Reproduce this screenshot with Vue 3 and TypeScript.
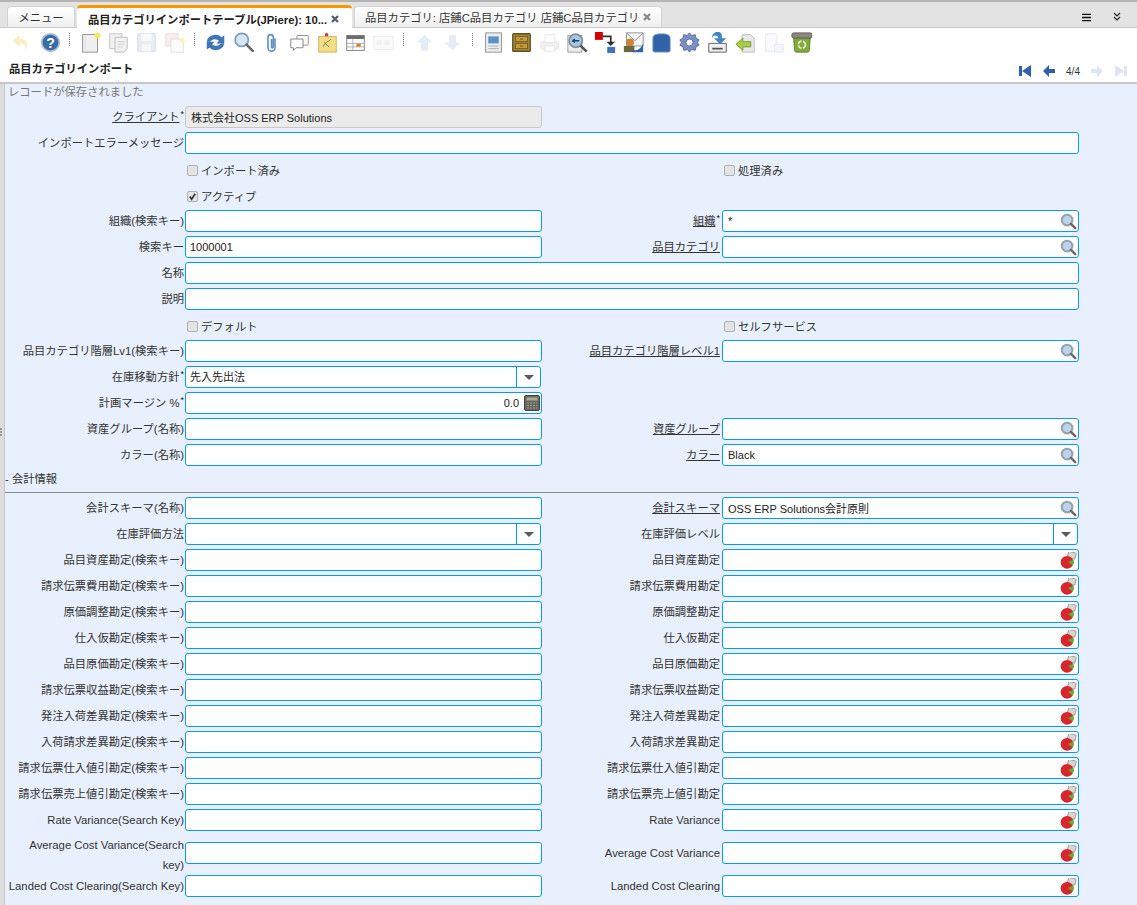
<script setup lang="ts">
type Cell = {
  label: string
  kind: 'text' | 'lookup' | 'select' | 'number' | 'account' | 'readonly' | 'check'
  value?: string
  link?: boolean
  req?: boolean
  checked?: boolean
}
type Row = { left?: Cell; right?: Cell; section?: string; tall?: boolean }

const tx = (label: string, value = ''): Cell => ({ label, kind: 'text', value })
const lk = (label: string, value = '', req = false): Cell => ({ label, kind: 'lookup', value, link: true, req })
const ac = (label: string): Cell => ({ label, kind: 'account' })
const ck = (label: string, checked = false): Cell => ({ label, kind: 'check', checked })

const accounts: [string, string][] = [
  ['品目資産勘定(検索キー)', '品目資産勘定'],
  ['請求伝票費用勘定(検索キー)', '請求伝票費用勘定'],
  ['原価調整勘定(検索キー)', '原価調整勘定'],
  ['仕入仮勘定(検索キー)', '仕入仮勘定'],
  ['品目原価勘定(検索キー)', '品目原価勘定'],
  ['請求伝票収益勘定(検索キー)', '請求伝票収益勘定'],
  ['発注入荷差異勘定(検索キー)', '発注入荷差異勘定'],
  ['入荷請求差異勘定(検索キー)', '入荷請求差異勘定'],
  ['請求伝票仕入値引勘定(検索キー)', '請求伝票仕入値引勘定'],
  ['請求伝票売上値引勘定(検索キー)', '請求伝票売上値引勘定'],
  ['Rate Variance(Search Key)', 'Rate Variance'],
  ['Average Cost Variance(Search key)', 'Average Cost Variance'],
  ['Landed Cost Clearing(Search Key)', 'Landed Cost Clearing']
]

const rows: Row[] = [
  { left: { label: 'クライアント', kind: 'readonly', value: '株式会社OSS ERP Solutions', link: true, req: true } },
  { left: { label: 'インポートエラーメッセージ', kind: 'text' } },
  { left: ck('インポート済み'), right: ck('処理済み') },
  { left: ck('アクティブ', true) },
  { left: tx('組織(検索キー)'), right: lk('組織', '*', true) },
  { left: tx('検索キー', '1000001'), right: lk('品目カテゴリ') },
  { left: tx('名称') },
  { left: tx('説明') },
  { left: ck('デフォルト'), right: ck('セルフサービス') },
  { left: tx('品目カテゴリ階層Lv1(検索キー)'), right: lk('品目カテゴリ階層レベル1') },
  { left: { label: '在庫移動方針', kind: 'select', value: '先入先出法', req: true } },
  { left: { label: '計画マージン %', kind: 'number', value: '0.0', req: true } },
  { left: tx('資産グループ(名称)'), right: lk('資産グループ') },
  { left: tx('カラー(名称)'), right: lk('カラー', 'Black') },
  { section: '会計情報' },
  { left: tx('会計スキーマ(名称)'), right: lk('会計スキーマ', 'OSS ERP Solutions会計原則') },
  { left: { label: '在庫評価方法', kind: 'select' }, right: { label: '在庫評価レベル', kind: 'select' } },
  ...accounts.map(([l, r]) => ({ left: tx(l), right: ac(r), tall: l.startsWith('Average') }))
]

// 全幅の入力欄
const wide = new Set(['インポートエラーメッセージ', '名称', '説明'])

type Tool = { sep?: boolean; off?: boolean; svg?: string }
const tools: Tool[] = [
  { off: true, svg: '<path d="M11 3L3 10l8 7v-4c5 0 7 2 7 8 4-8 1-13-7-13z" fill="#f0d870"/>' },
  { svg: '<circle cx="12" cy="12" r="10" fill="#3a6ca8" stroke="#a9bfd8" stroke-width="2"/><text x="12" y="18" font-size="16" font-weight="700" font-family="Liberation Sans" text-anchor="middle" fill="#fff">?</text>' },
  { sep: true },
  { svg: '<rect x="3" y="3" width="17" height="20" fill="#f0f0f0" stroke="#888"/><path d="M6 4v18" stroke="#ddd"/><circle cx="20" cy="4" r="3.500" fill="#f5e56b"/>' },
  { off: true, svg: '<rect x="2" y="2" width="14" height="17" fill="#ddd" stroke="#666"/><path d="M8 6h14v13l-4 4H8z" fill="#ddd" stroke="#555"/><path d="M11 11h8M11 14h8M11 17h6" stroke="#888"/>' },
  { off: true, svg: '<rect x="2" y="2" width="20" height="20" fill="#c4d4e8" stroke="#8fa8c8"/><rect x="6" y="2" width="12" height="8" fill="#f4f4f4"/><rect x="7" y="14" width="10" height="8" fill="#eee"/>' },
  { off: true, svg: '<rect x="2" y="2" width="14" height="14" fill="#f0d0d0" stroke="#caa"/><rect x="8" y="8" width="14" height="15" fill="#f6f6f6" stroke="#aaa"/><circle cx="21" cy="10" r="3" fill="#f5e56b"/>' },
  { sep: true },
  { svg: '<path d="M2 11a10 9 0 0 1 17-5l3-2v9h-9l3-3a6 5 0 0 0-10 1z" fill="#3f74b5"/><path d="M22 13a10 9 0 0 1-17 5l-3 2v-9h9l-3 3a6 5 0 0 0 10-1z" fill="#3f74b5"/>' },
  { svg: '<circle cx="10" cy="9" r="7.500" fill="#d6e6f5" stroke="#7f9db9" stroke-width="2"/><path d="M15.500 14.500l7 7" stroke="#666" stroke-width="3" stroke-linecap="round"/>' },
  { svg: '<path d="M16 7v11a4 4 0 0 1-8 0V6a3 3 0 0 1 6 0v11a1 1 0 0 1-2 0V8" fill="none" stroke="#5f8fc4" stroke-width="1.800"/>' },
  { svg: '<rect x="9" y="4" width="13" height="11" rx="1" fill="#fff" stroke="#888"/><path d="M2 8h14v10H8l-3 3v-3H2z" fill="#fff" stroke="#777"/>' },
  { svg: '<rect x="2" y="5" width="20" height="18" fill="#f2de88" stroke="#c9b35a"/><circle cx="11" cy="3" r="2" fill="#d33"/><path d="M7 17c3-7 6-5 9-9M8 12l6 5" stroke="#8a7a36" fill="none"/>' },
  { svg: '<rect x="2" y="4" width="20" height="17" fill="#fff" stroke="#777"/><rect x="2" y="4" width="20" height="4" fill="#6d6d6d"/><rect x="13" y="13" width="5" height="4" fill="#ee7d22"/><path d="M2 13h20M2 17h20M9 8v13" stroke="#aaa"/>' },
  { off: true, svg: '<rect x="1" y="5" width="22" height="15" fill="#f6f6f6" stroke="#ccc"/><rect x="4" y="9" width="6" height="6" fill="#ddd"/><rect x="13" y="9" width="6" height="6" fill="#ddd"/>' },
  { sep: true },
  { off: true, svg: '<path d="M12 3l9 9h-5v9H8v-9H3z" fill="#c0d1ea"/>' },
  { off: true, svg: '<path d="M12 21l9-9h-5V3H8v9H3z" fill="#c0d1ea"/>' },
  { sep: true },
  { svg: '<rect x="3" y="1" width="18" height="22" fill="#eee" stroke="#888"/><rect x="6" y="5" width="12" height="8" fill="#5a93c9"/><path d="M6 16h12M6 19h12" stroke="#aaa"/>' },
  { svg: '<rect x="2" y="2" width="20" height="20" rx="1" fill="#a8893a" stroke="#5e5020" stroke-width="1.500"/><rect x="5" y="5" width="14" height="6" fill="#c99a3a" stroke="#6e5a22"/><rect x="5" y="13" width="14" height="6" fill="#c99a3a" stroke="#6e5a22"/><path d="M10 8h4M10 16h4" stroke="#5e5020"/>' },
  { off: true, svg: '<rect x="2" y="11" width="20" height="9" rx="2" fill="#ddd" stroke="#bbb"/><rect x="7" y="3" width="11" height="9" fill="#f8f8f8" stroke="#bbb"/><rect x="7" y="16" width="11" height="6" fill="#fff" stroke="#bbb"/>' },
  { svg: '<rect x="1" y="4" width="16" height="19" fill="#eee" stroke="#999"/><circle cx="10" cy="10" r="7.500" fill="#a9c6e2" stroke="#7f8fa0" stroke-width="2"/><path d="M6 10h8M6 10l3-2M6 10l3 2" stroke="#245" stroke-width="1.500" fill="none"/><path d="M15.500 15.500l7 7" stroke="#555" stroke-width="3"/>' },
  { svg: '<rect x="0" y="0" width="9" height="9" fill="#d40000"/><path d="M9 5h9v7" fill="none" stroke="#333" stroke-width="2"/><path d="M13 11h10l-5 5z" fill="#333"/><rect x="14" y="17" width="9" height="7" fill="#3f74b5"/>' },
  { svg: '<path d="M4 1h19v15H4z" fill="#f6f6f6" stroke="#888"/><path d="M4 1l9.500 9L23 1" fill="none" stroke="#888"/><circle cx="8" cy="12" r="4.500" fill="#c9863a"/><rect x="1" y="16" width="12" height="7" fill="#6d6a3a"/><path d="M11 20c5 2 9 0 12-7v10H11z" fill="#3366a8"/>' },
  { svg: '<path d="M2 8c0-5 3-6 10-6s10 1 10 6v13c0 1-1 2-2 2H4c-1 0-2-1-2-2z" fill="#2f62a6" stroke="#9bb4d0"/>' },
  { svg: '<path d="M12 1l2.500 3 4-1 1 4 3.500 2-2 3 2 3-3.500 2-1 4-4-1-2.500 3-2.500-3-4 1-1-4L1 15l2-3-2-3 3.500-2 1-4 4 1z" fill="#7b8fc4" stroke="#55659a"/><circle cx="12" cy="12" r="4" fill="#fff" stroke="#55659a"/>' },
  { svg: '<path d="M2 13h20v10H2z" fill="#f0f0f0" stroke="#555"/><rect x="6" y="18" width="12" height="2" fill="#555"/><path d="M6 8a6 7 0 0 1 11-5v4h5l-7 7-7-7h5a2 2 0 0 0-7 1z" fill="#3f86c2"/>' },
  { svg: '<path d="M8 3h10l4 4v16H8z" fill="#e8e8e8" stroke="#bbb"/><path d="M1 14l8-7v4h9v6H9v4z" fill="#a8cc4a" stroke="#7a9a30"/>' },
  { off: true, svg: '<path d="M3 2h13v20H3z" fill="#f4f4f4" stroke="#ccc"/><rect x="13" y="14" width="10" height="9" fill="#dfe8f2" stroke="#bcd"/>' },
  { svg: '<path d="M3 6h19l-1 15c0 1-1 2-2 2H6c-1 0-2-1-2-2z" fill="#84a83e" stroke="#5c7a2a"/><rect x="1" y="1" width="23" height="6" rx="2" fill="#8a8a7c" stroke="#555"/><circle cx="12.500" cy="14.500" r="4" fill="none" stroke="#dcecb8" stroke-width="2" stroke-dasharray="5 1.500"/>' }
]
</script>

<template>
  <div class="page">
    <div class="tabbar">
      <div class="tabs">
        <div class="tab tab-menu">メニュー</div>
        <div class="tab tab-active">
          <span>品目カテゴリインポートテーブル(JPiere): 10...</span>
          <svg class="close" viewBox="0 0 10 10"><path d="M2 2l6 6M8 2l-6 6" stroke="#56606c" stroke-width="2.400" /></svg>
        </div>
        <div class="tab tab-other">
          <span>品目カテゴリ: 店鋪C品目カテゴリ 店鋪C品目カテゴリ</span>
          <svg class="close" viewBox="0 0 10 10"><path d="M2 2l6 6M8 2l-6 6" stroke="#8a8a8a" stroke-width="2.400" /></svg>
        </div>
      </div>
      <div class="tabbar-btns">
        <svg viewBox="0 0 12 10" class="burger"><path d="M1 1.500h10M1 5h10M1 8.500h10" stroke="#111" stroke-width="1.500" /></svg>
        <svg viewBox="0 0 10 10" class="chev"><path d="M2 1l3 3 3-3M2 5l3 3 3-3" fill="none" stroke="#222" stroke-width="1.200" /></svg>
      </div>
    </div>

    <div class="toolbar">
      <template v-for="(t, i) in tools" :key="i">
        <span v-if="t.sep" class="sep"></span>
        <span v-else class="tool">
          <svg viewBox="0 0 24 24" :class="{ off: t.off }" v-html="t.svg"></svg>
        </span>
      </template>
    </div>

    <div class="headbar">
      <span class="head-title">品目カテゴリインポート</span>
      <div class="pager">
        <svg viewBox="0 0 14 14"><path d="M1 2h3v10H1zM13 1v12L4 7z" fill="#2f5fae" /></svg>
        <svg viewBox="0 0 14 14"><path d="M1 7l6-6v4h6v4H7v4z" fill="#2f5fae" /></svg>
        <span class="pager-text">4/4</span>
        <svg viewBox="0 0 14 14"><path d="M13 7L7 1v4H1v4h6v4z" fill="#dfe6f3" /></svg>
        <svg viewBox="0 0 14 14"><path d="M10 2h3v10h-3zM1 1v12l9-6z" fill="#dfe6f3" /></svg>
      </div>
    </div>

    <div class="body">
      <div class="splitter"></div>
      <div class="content">
        <div class="status">レコードが保存されました</div>
        <div class="form">
          <template v-for="(r, i) in rows" :key="i">
            <div v-if="r.section" class="section">
              <span>- {{ r.section }}</span>
            </div>
            <template v-else>
              <template v-for="(c, side) in [r.left, r.right]" :key="side">
                <template v-if="c">
                  <template v-if="c.kind === 'check'">
                    <div></div>
                    <label class="check">
                      <span class="box" :class="{ on: c.checked }">
                        <svg v-if="c.checked" viewBox="0 0 10 10"><path d="M2 5l2 3 4-6" fill="none" stroke="#333" stroke-width="1.800" /></svg>
                      </span>
                      {{ c.label }}
                    </label>
                  </template>
                  <template v-else>
                    <div class="label" :class="{ two: r.tall && side === 0, right: side === 1 }">
                      <span :class="{ link: c.link }">{{ c.label }}</span><sup v-if="c.req" class="star">*</sup>
                    </div>
                    <div class="field" :class="[c.kind, { wide: wide.has(c.label) }]">
                      <template v-if="c.kind === 'select'">
                        <div class="sel-text">{{ c.value }}</div>
                        <div class="sel-btn"><i class="caret"></i></div>
                      </template>
                      <template v-else>
                        <span class="val">{{ c.value }}</span>
                        <svg v-if="c.kind === 'lookup'" class="ico" viewBox="0 0 24 24">
                          <circle cx="10" cy="10" r="7.500" fill="#bcd3ec" stroke="#97a3ad" stroke-width="3" />
                          <path d="M15.500 15.500l6 6" stroke="#6a6a6a" stroke-width="3.500" stroke-linecap="round" />
                        </svg>
                        <svg v-if="c.kind === 'number'" class="ico calc" viewBox="0 0 16 16">
                          <rect x="0.500" y="0.500" width="15" height="15" rx="1.500" fill="#66685f" stroke="#444" />
                          <rect x="2.500" y="2.500" width="11" height="3" fill="#a8ab8c" />
                          <path d="M3 8h10M3 10.500h10M3 13h10" stroke="#9a9a90" stroke-dasharray="2 1" />
                        </svg>
                        <svg v-if="c.kind === 'account'" class="ico" viewBox="0 0 24 24">
                          <rect x="11" y="0" width="11" height="9" rx="1" fill="#d6d6d6" stroke="#888" transform="rotate(15 16 5)" />
                          <circle cx="10" cy="14.500" r="9" fill="#d9262b" />
                          <path d="M11 14l8-3a9 9 0 0 1-1 8z" fill="#5fae3a" />
                        </svg>
                      </template>
                    </div>
                  </template>
                </template>
                <template v-else-if="side === 1 && !(r.left && wide.has(r.left.label))">
                  <div></div><div></div>
                </template>
              </template>
            </template>
          </template>
        </div>
      </div>
    </div>
  </div>
</template>

<style>
html,
body {
  margin: 0;
  background: #fff;
}
</style>

<style scoped>
.page {
  width: 1137px;
  height: 905px;
  overflow: hidden;
  display: flex;
  flex-direction: column;
  font-family: 'Liberation Sans', 'Noto Sans CJK JP', sans-serif;
  font-size: 11.3px;
  color: #333;
}

.tabbar {
  flex: none;
  height: 25px;
  border-top: 2px solid #b4b4b4;
  border-bottom: 1px solid #c8c8c8;
  background: #e3e3e3;
  display: flex;
  justify-content: space-between;
  align-items: flex-end;
}

.tabs {
  display: flex;
  align-items: flex-end;
  padding-left: 7px;
  gap: 2px;
  margin-bottom: -1px;
}

.tab {
  box-sizing: border-box;
  height: 22px;
  border: 1px solid #d2d2d2;
  border-bottom: 1px solid #c8c8c8;
  border-radius: 4px 4px 0 0;
  background: linear-gradient(#fff, #f0f0f0);
  display: flex;
  align-items: center;
  padding: 0 10px;
  white-space: nowrap;
}

.tab-menu {
  width: 68px;
  justify-content: center;
  padding: 0;
}

.tab-active {
  width: 275px;
  height: 23px;
  font-weight: 700;
  border: none;
  border-top: 3px solid #f39800;
  background: #fff;
  justify-content: space-between;
  padding: 1px 12px 0 11px;
  color: #222;
}

.tab-other {
  width: 308px;
  justify-content: space-between;
  padding: 0 9px 0 10px;
}

.close {
  width: 10px;
  height: 10px;
  flex: none;
}

.tabbar-btns {
  display: flex;
  align-items: center;
  gap: 20px;
  height: 20px;
  padding-right: 15px;
}

.burger {
  width: 11px;
  height: 9px;
}

.chev {
  width: 10px;
  height: 10px;
}

.toolbar {
  flex: none;
  height: 28px;
  display: flex;
  align-items: center;
  padding-left: 6px;
  background: #fff;
}

.tool {
  width: 28px;
  height: 24px;
  display: flex;
  align-items: center;
  justify-content: center;
}

.tool:nth-child(2) {
  margin-left: 2px;
  margin-right: -1px;
}

.tool svg {
  width: 21px;
  height: 21px;
}

.tool svg.off {
  opacity: 0.4;
}

.sep {
  width: 13px;
  height: 14px;
  margin-top: -4px;
  background: linear-gradient(#777 50%, transparent 50%) center / 1px 2px repeat-y;
}

.headbar {
  flex: none;
  box-sizing: border-box;
  height: 28px;
  border-bottom: 2px solid #c8c8c8;
  padding: 0 9px;
  display: flex;
  justify-content: space-between;
  align-items: center;
  background: #fff;
}

.head-title {
  font-weight: 700;
  color: #222;
  margin-top: -3px;
}

.pager {
  display: flex;
  align-items: center;
  gap: 10px;
  margin-top: 4px;
}

.pager svg {
  width: 14px;
  height: 14px;
}

.pager-text {
  font-size: 10px;
  width: 14px;
  text-align: center;
}

.body {
  flex: 1;
  display: flex;
  min-height: 0;
  background: #e8effd;
}

.splitter {
  flex: none;
  width: 4px;
  background: #dcdcdc;
  border-right: 1px solid #c8c8c8;
  position: relative;
}

/* スプリッターのつまみ */
.splitter::after {
  content: '';
  position: absolute;
  left: 0;
  top: 344px;
  width: 2px;
  height: 8px;
  background: linear-gradient(#999 66%, transparent 66%) 0 0 / 2px 3px repeat-y;
}

.content {
  flex: 1;
  min-width: 0;
}

.status {
  height: 22px;
  padding-left: 3px;
  line-height: 16px;
  color: #777;
  box-sizing: border-box;
}

.form {
  display: grid;
  grid-template-columns: 180px 357px 180px 357px;
  grid-auto-rows: minmax(22px, auto);
  row-gap: 4px;
  align-items: center;
}

.label {
  text-align: right;
  padding-right: 1px;
  line-height: 17px;
  color: #333;
}

.label.right {
  padding-right: 2px;
}

/* 折り返すラベルは行間が広い */
.label.two {
  line-height: 20px;
  margin-bottom: -4px;
}

.link {
  text-decoration: underline;
}

.star {
  font-size: 9px;
  line-height: 0;
  vertical-align: 4px;
  margin-left: 1px;
  color: #222;
}

.field {
  box-sizing: border-box;
  height: 22px;
  border: 1px solid #0a98f5;
  border-radius: 3px;
  background: #fff;
  padding: 0 4px;
  display: flex;
  align-items: center;
  color: #222;
  position: relative;
  font-size: 11px;
}

.field.lookup,
.field.readonly {
  padding-left: 5px;
}

.field.wide {
  grid-column: 2 / 5;
  width: 894px;
}

.field.readonly {
  background: #ebebeb;
  border-color: #c8c8c8;
}

.val {
  flex: 1;
  white-space: nowrap;
}

.field.number .val {
  text-align: right;
  padding-right: 18px;
}

.ico {
  position: absolute;
  right: 1px;
  top: 2px;
  width: 17px;
  height: 17px;
}

.ico.calc {
  width: 16px;
  height: 16px;
}

.field.select {
  padding: 0;
  width: 356px;
}

.sel-text {
  flex: 1;
  align-self: stretch;
  border-right: 1px solid #0a98f5;
  padding: 0 4px;
  line-height: 20px;
}

.sel-btn {
  width: 23px;
  display: flex;
  align-items: center;
  justify-content: center;
}

.caret {
  width: 0;
  height: 0;
  border-left: 5px solid transparent;
  border-right: 5px solid transparent;
  border-top: 5px solid #5c5c5c;
}

.check {
  display: flex;
  align-items: center;
  gap: 3px;
  padding-left: 2px;
  color: #333;
  margin-top: 2px;
}

.box {
  box-sizing: border-box;
  width: 11px;
  height: 11px;
  border: 1px solid #b0b0b0;
  border-radius: 2px;
  background: #e4e4e4;
  display: flex;
}

.box svg {
  width: 9px;
  height: 9px;
}

.section {
  grid-column: 1 / 5;
  box-sizing: border-box;
  height: 23px;
  border-bottom: 1px solid #888;
  line-height: 18px;
  color: #333;
  width: 1074px;
}
</style>
